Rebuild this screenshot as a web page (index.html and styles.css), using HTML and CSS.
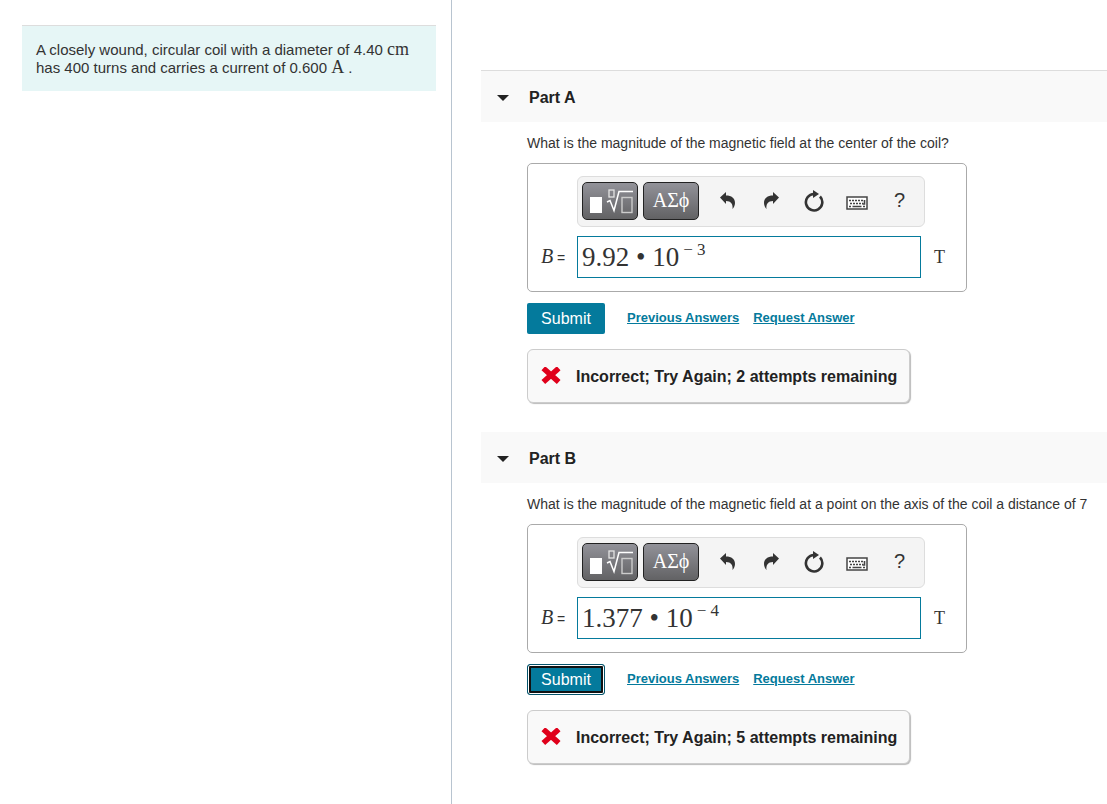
FILE: index.html
```html
<!DOCTYPE html>
<html lang="en">

<head>
    <meta charset="UTF-8">
    <meta name="viewport" content="width=device-width, initial-scale=1.0">
    <title>Magnetic Field of a Coil</title>
    <link rel="stylesheet" href="styles.css">
</head>

<body>
    <!-- shared icons -->
    <svg class="sprite" aria-hidden="true">
        <symbol id="icon-template" viewBox="0 0 56 38">
            <rect x="8" y="15" width="12" height="16" fill="#fff"/>
            <rect x="27" y="8" width="5" height="7" fill="none" stroke="#e4e4e4" stroke-width="1.300"/>
            <path d="M25 20l3-1.500 4 10 5-19h14" fill="none" stroke="#fff" stroke-width="1.500"/>
            <rect x="40" y="15.500" width="10" height="15" fill="none" stroke="#ccc" stroke-width="1.400"/>
        </symbol>
        <symbol id="icon-undo" viewBox="0 0 16 18">
            <path d="M0 5.500L6 0v3.500C11.500 3.500 15 6 15 11c0 2-1 4.500-2.500 6 .600-5-1.500-8-6.500-8v3z" fill="#333"/>
        </symbol>
        <symbol id="icon-redo" viewBox="0 0 16 18">
            <path d="M16 5.500L10 0v3.500C4.500 3.500 1 6 1 11c0 2 1 4.500 2.500 6-.600-5 1.500-8 6.500-8v3z" fill="#333"/>
        </symbol>
        <symbol id="icon-reset" viewBox="0 0 20 22">
            <path d="M10 4A8.200 8.200 0 1 0 16 6.500" fill="none" stroke="#333" stroke-width="2.600"/>
            <path d="M9 0l6 4-6 4z" fill="#333"/>
        </symbol>
        <symbol id="icon-keyboard" viewBox="0 0 22 14">
            <rect x="1" y="1" width="20" height="12" fill="#fff" stroke="#444" stroke-width="1.500"/>
            <path d="M3 4.500h14M4 7.500h13M3 10.500h2M17 10.500h2" fill="none" stroke="#444" stroke-width="1.600" stroke-dasharray="2 1"/>
            <path d="M6.500 10.500h9M18.500 4v4h-2" fill="none" stroke="#444" stroke-width="1.600"/>
        </symbol>
        <symbol id="icon-wrong" viewBox="0 0 16 16">
            <path d="M3.500 2.500l9 8M12.500 2.500l-9 8" stroke="#e0001b" stroke-width="4.400" stroke-linecap="square"/>
        </symbol>
    </svg>

    <div class="page">
        <aside class="problem">
            <p class="intro">A closely wound, circular coil with a diameter of 4.40 <span class="unit">cm</span><br>has 400 turns and carries a current of 0.600 <span class="unit">A</span> .</p>
        </aside>

        <main class="parts">
            <section class="part">
                <h2 class="part-header"><button type="button" class="part-toggle" aria-expanded="true">Part A</button></h2>
                <div class="part-body">
                    <p class="question">What is the magnitude of the magnetic field at the center of the coil?</p>
                    <div class="answer-box">
                        <div class="toolbar">
                            <button type="button" class="palette" aria-label="Templates"><svg width="56" height="38"><use href="#icon-template"/></svg></button>
                            <button type="button" class="palette">ΑΣϕ</button>
                            <div class="tools">
                                <button type="button" class="tool" aria-label="Undo"><svg width="16" height="18"><use href="#icon-undo"/></svg></button>
                                <button type="button" class="tool" aria-label="Redo"><svg width="16" height="18"><use href="#icon-redo"/></svg></button>
                                <button type="button" class="tool" aria-label="Reset"><svg width="20" height="22"><use href="#icon-reset"/></svg></button>
                                <button type="button" class="tool" aria-label="Keyboard shortcuts"><svg class="keyboard" width="22" height="14"><use href="#icon-keyboard"/></svg></button>
                                <button type="button" class="tool" aria-label="Help">?</button>
                            </div>
                        </div>
                        <span class="symbol" id="labelA"><i>B</i> =</span>
                        <div class="math-field" role="textbox" contenteditable="true" spellcheck="false" aria-labelledby="labelA">9.92 • 10<sup>− 3</sup></div>
                        <span class="unit">T</span>
                    </div>
                    <div class="actions">
                        <button type="button" class="submit">Submit</button>
                        <a href="#">Previous Answers</a>
                        <a href="#">Request Answer</a>
                    </div>
                    <div class="feedback"><svg width="20" height="20"><use href="#icon-wrong"/></svg>Incorrect; Try Again; 2 attempts remaining</div>
                </div>
            </section>

            <section class="part">
                <h2 class="part-header"><button type="button" class="part-toggle" aria-expanded="true">Part B</button></h2>
                <div class="part-body">
                    <p class="question">What is the magnitude of the magnetic field at a point on the axis of the coil a distance of 7</p>
                    <div class="answer-box">
                        <div class="toolbar">
                            <button type="button" class="palette" aria-label="Templates"><svg width="56" height="38"><use href="#icon-template"/></svg></button>
                            <button type="button" class="palette">ΑΣϕ</button>
                            <div class="tools">
                                <button type="button" class="tool" aria-label="Undo"><svg width="16" height="18"><use href="#icon-undo"/></svg></button>
                                <button type="button" class="tool" aria-label="Redo"><svg width="16" height="18"><use href="#icon-redo"/></svg></button>
                                <button type="button" class="tool" aria-label="Reset"><svg width="20" height="22"><use href="#icon-reset"/></svg></button>
                                <button type="button" class="tool" aria-label="Keyboard shortcuts"><svg class="keyboard" width="22" height="14"><use href="#icon-keyboard"/></svg></button>
                                <button type="button" class="tool" aria-label="Help">?</button>
                            </div>
                        </div>
                        <span class="symbol" id="labelB"><i>B</i> =</span>
                        <div class="math-field" role="textbox" contenteditable="true" spellcheck="false" aria-labelledby="labelB">1.377 • 10<sup>− 4</sup></div>
                        <span class="unit">T</span>
                    </div>
                    <div class="actions">
                        <button type="button" class="submit focused">Submit</button>
                        <a href="#">Previous Answers</a>
                        <a href="#">Request Answer</a>
                    </div>
                    <div class="feedback"><svg width="20" height="20"><use href="#icon-wrong"/></svg>Incorrect; Try Again; 5 attempts remaining</div>
                </div>
            </section>
        </main>
    </div>
</body>

</html>
```
FILE: styles.css
```css
* {
    box-sizing: border-box;
}

body {
    margin: 0;
    background-color: #fff;
    color: #333;
    font-family: "Liberation Sans", Arial, sans-serif;
    font-size: 14px;
    line-height: 18px;
}

button {
    font-family: inherit;
    cursor: pointer;
}

.sprite {
    display: none;
}

.page {
    display: grid;
    grid-template-columns: 452px minmax(0, 1fr);
    min-height: 100vh;
}

.problem {
    padding: 25px 15px 0 22px;
    border-right: 1px solid #b8c4d0;
}

.intro {
    margin: 0;
    padding: 15px 14px 14px;
    background-color: #e6f6f6;
    border-top: 1px solid #ddd;
    font-size: 15px;
}

.unit {
    font-family: "Liberation Serif", "Times New Roman", serif;
    font-size: 18px;
    line-height: 1px;
}

.parts {
    padding: 70px 0 0 29px;
    overflow: hidden;
}

.part {
    margin-bottom: 28px;
}

.part-header {
    margin: 0;
    background-color: #f9f9f9;
    border-top: 1px solid #fff;
}

.part:first-child .part-header {
    border-top-color: #ddd;
}

.part-toggle {
    display: flex;
    align-items: center;
    gap: 20px;
    width: 100%;
    height: 51px;
    padding: 2px 16px 0;
    border: none;
    background: none;
    color: #222;
    font-size: 16px;
    font-weight: bold;
}

.part-toggle::before {
    content: "";
    border: 6px solid transparent;
    border-top-color: #222;
    border-bottom: none;
}

.part-body {
    padding: 12px 0 0 46px;
}

.question {
    margin: 0 0 11px;
    white-space: nowrap;
}

.answer-box {
    display: grid;
    grid-template-columns: 36px 344px auto;
    align-items: center;
    row-gap: 9px;
    width: 440px;
    padding: 12px 12px 13px 13px;
    border: 1px solid #aaa;
    border-radius: 5px;
}

.answer-box > .unit {
    padding-left: 13px;
}

.toolbar {
    grid-column: 2 / 4;
    display: flex;
    align-items: center;
    gap: 5px;
    width: 348px;
    height: 51px;
    padding: 0 4px 2px;
    background-color: #f4f4f4;
    border: 1px solid #ddd;
    border-radius: 6px;
}

.palette {
    display: flex;
    flex: none;
    align-items: center;
    justify-content: center;
    width: 56px;
    height: 38px;
    padding: 0;
    border: 1px solid #222;
    border-radius: 5px;
    background: linear-gradient(#929299, #626264);
    color: #fff;
    font-family: "Liberation Serif", "Times New Roman", serif;
    font-size: 20px;
}

.palette svg {
    flex: none;
}

.tools {
    display: flex;
    padding-left: 2px;
}

.tool {
    display: flex;
    align-items: center;
    justify-content: center;
    width: 43px;
    height: 38px;
    padding: 0;
    border: none;
    background: none;
    color: #333;
    font-size: 20px;
}

.keyboard {
    margin-top: 4px;
}

.symbol i {
    font-family: "Liberation Serif", "Times New Roman", serif;
    font-size: 20px;
}

.math-field {
    height: 42px;
    padding: 0 4px;
    border: 1px solid #047a9c;
    font-family: "Liberation Serif", "Times New Roman", serif;
    font-size: 27px;
    line-height: 40px;
    white-space: nowrap;
    overflow: hidden;
}

.math-field sup {
    padding-left: 4px;
    font-size: 17px;
    line-height: 17px;
    vertical-align: 11px;
}

.actions {
    display: flex;
    align-items: center;
    gap: 14px;
    margin: 11px 0 15px;
}

.actions a {
    padding-bottom: 2px;
    color: #047a9c;
    font-size: 13px;
    font-weight: bold;
}

.submit {
    width: 78px;
    height: 31px;
    margin-right: 8px;
    padding: 0;
    border: none;
    border-radius: 2px;
    background-color: #047a9c;
    color: #fff;
    font-size: 16px;
}

.submit.focused {
    border: 1px solid #04546c;
    border-radius: 3px;
    box-shadow: inset 0 0 0 1px #fff, inset 0 0 0 3px #111;
}

.feedback {
    display: inline-flex;
    align-items: center;
    gap: 15px;
    height: 54px;
    padding: 1px 12px 0 13px;
    background-color: #f9f9f9;
    border: 1px solid #ccc;
    border-radius: 6px;
    box-shadow: 1px 1px 1px #bbb;
    color: #222;
    font-size: 16px;
    font-weight: bold;
    vertical-align: top;
}
```
